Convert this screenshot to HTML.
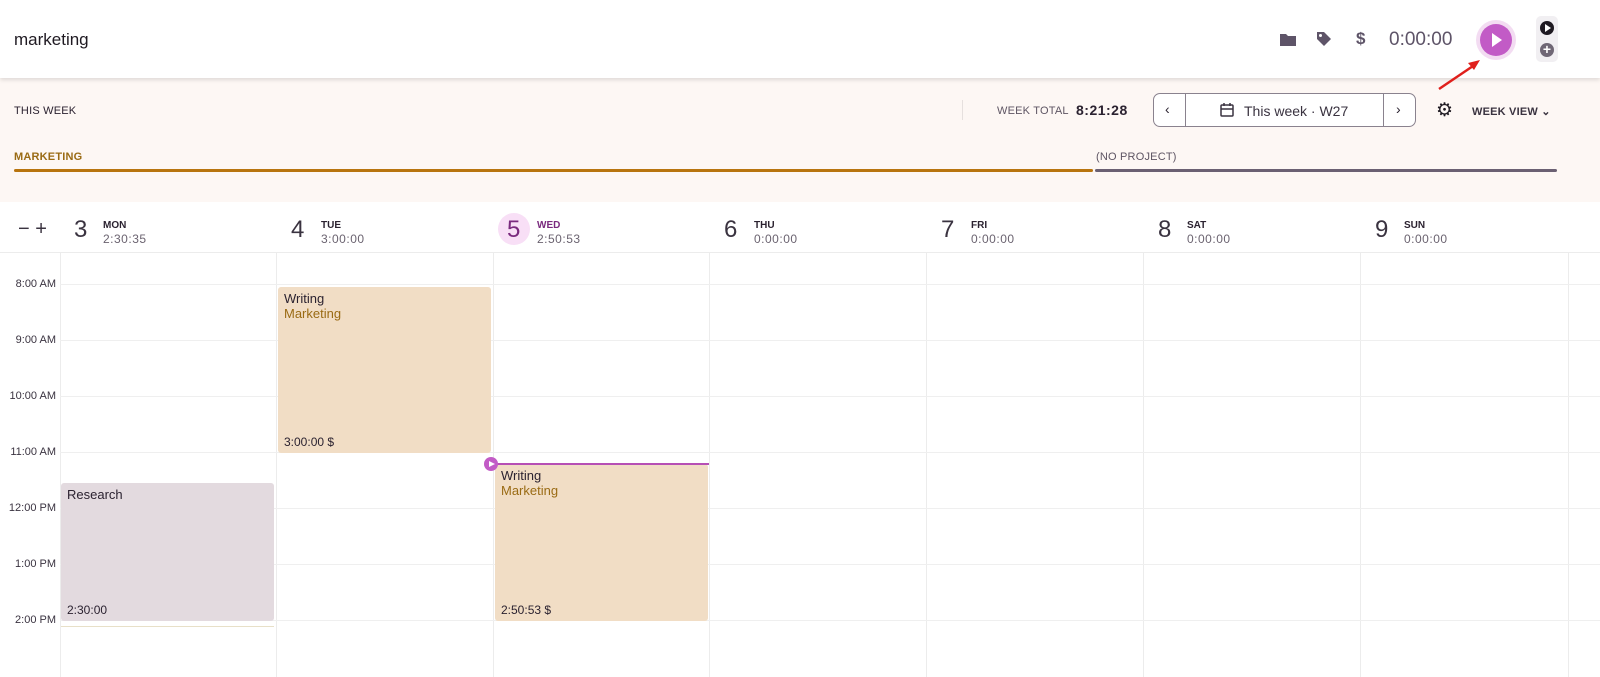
<!DOCTYPE html>
<html><head><meta charset="utf-8"><style>
*{margin:0;padding:0;box-sizing:border-box}
body{width:1600px;height:677px;overflow:hidden;background:#fff;font-family:"Liberation Sans",sans-serif;color:#2b2230;position:relative}
.a{position:absolute}
.hdr{left:0;top:0;width:1600px;height:78px;background:#fff;box-shadow:0 2px 4px rgba(0,0,0,.12);z-index:3}
.band{left:0;top:78px;width:1600px;height:124px;background:#fdf7f4}
.sm{font-size:11px;font-weight:bold;color:#5e5563;letter-spacing:.2px}
.vl{top:253px;width:1px;height:424px;background:#ececec}
.hl{left:60px;width:1540px;height:1px;background:#efefef}
.tl{left:0;width:56px;text-align:right;font-size:11px;color:#3a3340}
.dn{font-size:24px;color:#3a3340;font-weight:300}
.dw{font-size:10px;font-weight:bold;color:#2b2230}
.dt{font-size:12px;color:#6b6370;letter-spacing:.5px}
.ev{border-radius:3px;padding:4px 6px;font-size:13px}
</style></head><body>
<div class="a hdr">
 <div class="a" style="left:14px;top:30px;font-size:17px;color:#1f1a22">marketing</div>
 <svg class="a" style="left:1280px;top:33px" width="16" height="13" viewBox="0 0 16 13"><path d="M0 1h6l2 2h8v10H0z" fill="#5e5468"/></svg>
 <svg class="a" style="left:1316px;top:31px" width="16" height="16" viewBox="0 0 16 16"><path d="M1 1h7l7 7-7 7-7-7z" fill="#5e5468"/><circle cx="4.5" cy="4.5" r="1.5" fill="#fff"/></svg>
 <div class="a" style="left:1356px;top:29px;font-size:17px;font-weight:bold;color:#5e5468">$</div>
 <div class="a" style="left:1389px;top:29px;font-size:19px;color:#5e5468">0:00:00</div>
 <div class="a" style="left:1476px;top:20px;width:40px;height:40px;border-radius:50%;background:#f3dcf2"></div>
 <div class="a" style="left:1480px;top:24px;width:32px;height:32px;border-radius:50%;background:#c25bc6"></div>
 <svg class="a" style="left:1491px;top:32px" width="12" height="16" viewBox="0 0 12 16"><path d="M1 1l10 7-10 7z" fill="#fff"/></svg>
 <div class="a" style="left:1536px;top:16px;width:22px;height:46px;border-radius:5px;background:#f1eff2"></div>
 <div class="a" style="left:1540px;top:21px;width:14px;height:14px;border-radius:50%;background:#1f1a22"></div>
 <svg class="a" style="left:1545px;top:24px" width="6" height="8"><path d="M0 0l6 4-6 4z" fill="#fff"/></svg>
 <div class="a" style="left:1540px;top:43px;width:14px;height:14px;border-radius:50%;background:#6f6775;color:#fff;font-size:14px;line-height:13px;text-align:center;font-weight:bold">+</div>
</div>
<svg class="a" style="left:1436px;top:56px;z-index:4" width="48" height="36"><path d="M3 33L40 8" stroke="#e0201c" stroke-width="2.5"/><path d="M44 4l-12 3 6 7z" fill="#e0201c"/></svg>
<div class="a band">
 <div class="a sm" style="left:14px;top:27px;font-weight:normal;color:#2b2230;font-size:11px">THIS WEEK</div>
 <div class="a" style="left:962px;top:22px;width:1px;height:20px;background:#e6e0de"></div>
 <div class="a sm" style="left:997px;top:27px;font-weight:normal">WEEK TOTAL</div>
 <div class="a" style="left:1076px;top:24px;font-size:14px;font-weight:bold;color:#2b2230;letter-spacing:.5px">8:21:28</div>
 <div class="a" style="left:1153px;top:15px;width:263px;height:34px;border:1px solid #8a828e;border-radius:7px;background:#fff"></div>
 <div class="a" style="left:1185px;top:16px;width:1px;height:32px;background:#8a828e"></div>
 <div class="a" style="left:1383px;top:16px;width:1px;height:32px;background:#8a828e"></div>
 <div class="a" style="left:1165px;top:23px;font-size:14px;color:#2b2230">‹</div>
 <div class="a" style="left:1396px;top:23px;font-size:14px;color:#2b2230">›</div>
 <svg class="a" style="left:1220px;top:24px" width="14" height="15" viewBox="0 0 14 15"><rect x="1" y="3" width="12" height="11" rx="1" fill="none" stroke="#3a3340" stroke-width="1.5"/><path d="M1 7h12M4 1v3M10 1v3" stroke="#3a3340" stroke-width="1.5"/></svg>
 <div class="a" style="left:1244px;top:25px;font-size:14px;color:#3a3340">This week · W27</div>
 <div class="a" style="left:1436px;top:21px;font-size:19px;color:#1f1a22">⚙</div>
 <div class="a sm" style="left:1472px;top:27px;color:#3a3340">WEEK VIEW ⌄</div>
 <div class="a sm" style="left:14px;top:73px;color:#9a6b14">MARKETING</div>
 <div class="a sm" style="left:1096px;top:73px;font-weight:normal;color:#5e5563">(NO PROJECT)</div>
 <div class="a" style="left:14px;top:91px;width:1079px;height:3px;background:#b8740e;border-radius:2px"></div>
 <div class="a" style="left:1095px;top:91px;width:462px;height:3px;background:#6b6072;border-radius:2px"></div>
</div>
<div class="a" style="left:0;top:252px;width:1600px;height:1px;background:#ececec"></div>
<div class="a" style="left:18px;top:218px;font-size:20px;color:#3a3340">− +</div>
<div class="a" style="left:498px;top:213px;width:32px;height:32px;border-radius:50%;background:#f8dff6"></div>
<!-- day headers -->
<div class="a dn" style="left:74px;top:216px">3</div><div class="a dw" style="left:103px;top:220px">MON</div><div class="a dt" style="left:103px;top:232px">2:30:35</div>
<div class="a dn" style="left:291px;top:216px">4</div><div class="a dw" style="left:321px;top:220px">TUE</div><div class="a dt" style="left:321px;top:232px">3:00:00</div>
<div class="a dn" style="left:507px;top:216px;color:#7a2a7e">5</div><div class="a dw" style="left:537px;top:220px;color:#7a2a7e">WED</div><div class="a dt" style="left:537px;top:232px">2:50:53</div>
<div class="a dn" style="left:724px;top:216px">6</div><div class="a dw" style="left:754px;top:220px">THU</div><div class="a dt" style="left:754px;top:232px">0:00:00</div>
<div class="a dn" style="left:941px;top:216px">7</div><div class="a dw" style="left:971px;top:220px">FRI</div><div class="a dt" style="left:971px;top:232px">0:00:00</div>
<div class="a dn" style="left:1158px;top:216px">8</div><div class="a dw" style="left:1187px;top:220px">SAT</div><div class="a dt" style="left:1187px;top:232px">0:00:00</div>
<div class="a dn" style="left:1375px;top:216px">9</div><div class="a dw" style="left:1404px;top:220px">SUN</div><div class="a dt" style="left:1404px;top:232px">0:00:00</div>
<!-- grid -->
<div class="a vl" style="left:60px"></div><div class="a vl" style="left:276px"></div><div class="a vl" style="left:493px"></div><div class="a vl" style="left:709px"></div><div class="a vl" style="left:926px"></div><div class="a vl" style="left:1143px"></div><div class="a vl" style="left:1360px"></div><div class="a vl" style="left:1568px"></div>
<div class="a hl" style="top:284px"></div><div class="a hl" style="top:340px"></div><div class="a hl" style="top:396px"></div><div class="a hl" style="top:452px"></div><div class="a hl" style="top:508px"></div><div class="a hl" style="top:564px"></div><div class="a hl" style="top:620px"></div>
<div class="a tl" style="top:278px">8:00 AM</div><div class="a tl" style="top:334px">9:00 AM</div><div class="a tl" style="top:390px">10:00 AM</div><div class="a tl" style="top:446px">11:00 AM</div><div class="a tl" style="top:502px">12:00 PM</div><div class="a tl" style="top:558px">1:00 PM</div><div class="a tl" style="top:614px">2:00 PM</div>
<!-- events -->
<div class="a ev" style="left:278px;top:287px;width:213px;height:166px;background:#f1ddc5">Writing<div style="color:#9a6b14">Marketing</div><div class="a" style="left:6px;bottom:4px;font-size:12px">3:00:00 $</div></div>
<div class="a ev" style="left:495px;top:464px;width:213px;height:157px;background:#f1ddc5">Writing<div style="color:#9a6b14">Marketing</div><div class="a" style="left:6px;bottom:4px;font-size:12px">2:50:53 $</div></div>
<div class="a" style="left:493px;top:463px;width:216px;height:2px;background:#b64fb5"></div>
<div class="a" style="left:484px;top:457px;width:14px;height:14px;border-radius:50%;background:#c25bc6"></div>
<svg class="a" style="left:489px;top:461px" width="6" height="6"><path d="M0 0l6 3-6 3z" fill="#fff"/></svg>
<div class="a ev" style="left:61px;top:483px;width:213px;height:138px;background:#e3dadf">Research<div class="a" style="left:6px;bottom:4px;font-size:12px">2:30:00</div></div>
<div class="a" style="left:61px;top:626px;width:213px;height:1px;background:#e8e0c8"></div>
</body></html>
